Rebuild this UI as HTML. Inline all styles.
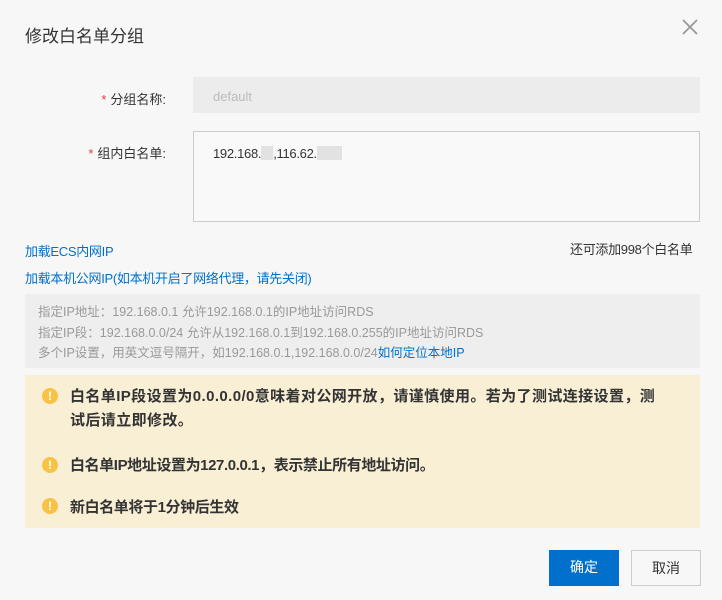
<!DOCTYPE html>
<html><head><meta charset="utf-8"><style>
*{margin:0;padding:0;box-sizing:border-box}
body{width:722px;height:600px;background:#f7f7f7;font-family:"Liberation Sans","Noto Sans CJK SC",sans-serif;position:relative;overflow:hidden;color:#333}
.a{position:absolute;white-space:nowrap}
.title{left:25px;top:22px;font-size:17px;color:#333}
.close{left:680px;top:17px}
.lbl{font-size:13px;color:#333;text-align:right;width:166px;left:0}
.lbl b{color:#e23c39;font-weight:normal;margin-right:4px}
.inp{left:193px;top:77px;width:507px;height:36px;background:#ececec;font-size:13px;color:#bbb;padding:12px 0 0 20px}
.ta{left:193px;top:131px;width:507px;height:91px;background:#f9f9f9;border:1px solid #ccc;font-size:13px;color:#333;padding:14px 0 0 19px;letter-spacing:-0.3px}
.blur{display:inline-block;background:#e2e2e2;height:14px;vertical-align:-2px}
.link{color:#0070cc;font-size:13px;letter-spacing:-0.3px}
.info{left:25px;top:294px;width:675px;height:74px;background:#eeeeee;font-size:12.5px;color:#999;padding:8px 0 0 13px;line-height:20.5px}
.warn{left:25px;top:375px;width:675px;height:153px;background:#f8efd5}
.w{position:absolute;left:45px;font-size:15px;color:#333;font-weight:bold;letter-spacing:-0.4px}
.ic{position:absolute;left:42px;width:16px;height:16px;border-radius:50%;background:#f8c345;color:#fff;font-size:12px;font-weight:bold;text-align:center;line-height:16px}
.btn{top:550px;width:70px;height:36px;font-size:14px;text-align:center;line-height:34px}
</style></head><body>
<div class="a title">修改白名单分组</div>
<svg class="a close" width="20" height="20" viewBox="0 0 20 20"><path d="M3 3L17 17M17 3L3 17" stroke="#999" stroke-width="1.8"/></svg>
<div class="a lbl" style="top:89px"><b>*</b>分组名称:</div>
<div class="a inp">default</div>
<div class="a lbl" style="top:143px"><b>*</b>组内白名单:</div>
<div class="a ta">192.168.<span class="blur" style="width:12px"></span>,116.62.<span class="blur" style="width:25px"></span></div>
<div class="a link" style="left:25px;top:241px">加载ECS内网IP</div>
<div class="a" style="left:570px;top:239px;font-size:13px;color:#333;letter-spacing:-0.3px">还可添加998个白名单</div>
<div class="a link" style="left:25px;top:268px">加载本机公网IP(如本机开启了网络代理，请先关闭)</div>
<div class="a info">指定IP地址：192.168.0.1 允许192.168.0.1的IP地址访问RDS<br>指定IP段：192.168.0.0/24 允许从192.168.0.1到192.168.0.255的IP地址访问RDS<br>多个IP设置，用英文逗号隔开，如192.168.0.1,192.168.0.0/24<span style="color:#0070cc">如何定位本地IP</span></div>
<div class="a warn">
<div class="ic" style="top:13px;left:17px">!</div>
<div class="w" style="top:10px;line-height:24px;letter-spacing:0.4px">白名单IP段设置为0.0.0.0/0意味着对公网开放，请谨慎使用。若为了测试连接设置，测<br>试后请立即修改。</div>
<div class="ic" style="top:82px;left:17px">!</div>
<div class="w" style="top:79px">白名单IP地址设置为127.0.0.1，表示禁止所有地址访问。</div>
<div class="ic" style="top:123px;left:17px">!</div>
<div class="w" style="top:121px">新白名单将于1分钟后生效</div>
</div>
<div class="a btn" style="left:549px;background:#0070cc;color:#fff">确定</div>
<div class="a btn" style="left:631px;border:1px solid #ccc;background:#f7f7f7;color:#333">取消</div>
</body></html>
